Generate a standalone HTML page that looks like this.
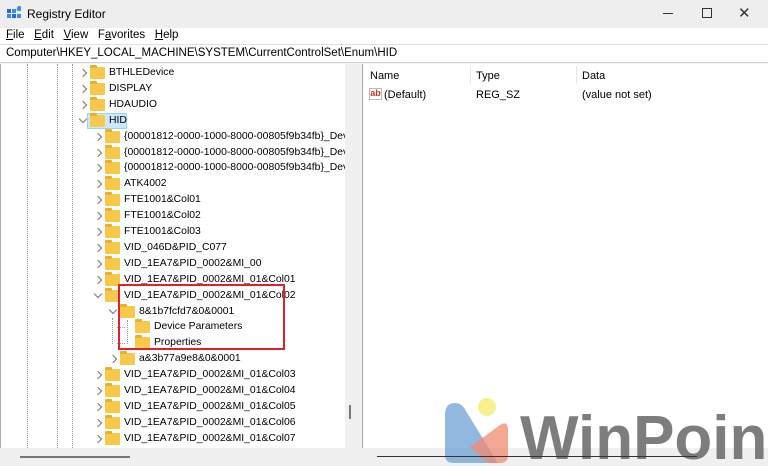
<!DOCTYPE html><html><head><style>
*{margin:0;padding:0;box-sizing:border-box}
body{width:768px;height:466px;overflow:hidden;background:#f3f3f3;font-family:"Liberation Sans",sans-serif;font-size:11px;color:#000;position:relative}
.a{position:absolute}
.row{position:absolute;height:16px;line-height:16px;white-space:nowrap;font-size:10.4px}
.f{position:absolute;width:15px;height:12px;top:2px;background:#f8c84a;border-radius:1px}
.f:before{content:"";position:absolute;left:0;top:-2px;width:7px;height:3px;background:#e8b030;border-radius:1px 1px 0 0}
.ch{position:absolute;top:4px;width:6px;height:6px;border-right:1px solid #777;border-bottom:1px solid #777;transform:rotate(-45deg)}
.cd{transform:rotate(45deg);top:2px}
.dl{position:absolute;border-left:1px dotted #999}
</style></head><body>
<div class="a" style="left:0;top:0;width:768px;height:28px;background:#eeeeee"></div>
<svg class="a" style="left:7px;top:6px" width="14" height="14"><rect x="0" y="3" width="4" height="4" fill="#1e6fd0"/><rect x="5" y="3" width="4" height="4" fill="#3b8de8"/><rect x="0" y="8" width="4" height="4" fill="#3b8de8"/><rect x="5" y="8" width="4" height="4" fill="#1e6fd0"/><rect x="10" y="8" width="4" height="4" fill="#3b8de8"/><rect x="10" y="0" width="4" height="5" fill="#3b8de8" transform="rotate(15 12 3)"/></svg>
<div class="a" style="left:27px;top:7px;font-size:12px">Registry Editor</div>
<div class="a" style="left:663px;top:13px;width:10px;height:1px;background:#333"></div>
<div class="a" style="left:702px;top:8px;width:10px;height:10px;border:1px solid #333"></div>
<div class="a" style="left:738px;top:4px;font-size:15px;color:#333">✕</div>
<div class="a" style="left:0;top:28px;width:768px;height:16px;background:#fff"></div>
<div class="a" style="left:6px;top:29px;font-size:11.5px"><u>F</u>ile&nbsp;&nbsp;&nbsp;<u>E</u>dit&nbsp;&nbsp;&nbsp;<u>V</u>iew&nbsp;&nbsp;&nbsp;F<u>a</u>vorites&nbsp;&nbsp;&nbsp;<u>H</u>elp</div>
<div class="a" style="left:0;top:44px;width:768px;height:19px;background:#fff;border-top:1px solid #e0e0e0;border-bottom:1px solid #d0d0d0"></div>
<div class="a" style="left:6px;top:47px;font-size:11.5px">Computer\HKEY_LOCAL_MACHINE\SYSTEM\CurrentControlSet\Enum\HID</div>
<div class="a" style="left:0;top:64px;width:345px;height:402px;background:#fff"></div>
<div class="a" style="left:0;top:64px;width:1px;height:402px;background:#aaa"></div>
<div class="a" style="left:345px;top:64px;width:17px;height:402px;background:#f0f0f0"></div>
<div class="a" style="left:349px;top:405px;width:2px;height:14px;background:#777"></div>
<div class="a" style="left:0;top:448px;width:345px;height:18px;background:#f0f0f0"></div>
<div class="a" style="left:20px;top:456px;width:110px;height:2px;background:#777"></div>
<div class="a" style="left:0;top:64px;width:345px;height:384px;overflow:hidden">
<div class="dl" style="left:27px;top:0;height:384px"></div>
<div class="dl" style="left:57px;top:0;height:384px"></div>
<div class="dl" style="left:72px;top:0;height:384px"></div>
<div class="dl" style="left:112px;top:254px;height:26px"></div>
<div class="dl" style="left:127px;top:256px;height:24px"></div>
<div id="tree" class="a" style="left:0;top:-64px;width:345px;height:466px"></div>
</div>
<div class="a" style="left:362px;top:64px;width:406px;height:402px;background:#fff;border-left:1px solid #aaa"></div>
<div class="a" style="left:370px;top:70px">Name</div>
<div class="a" style="left:476px;top:70px">Type</div>
<div class="a" style="left:582px;top:70px">Data</div>
<div class="a" style="left:470px;top:66px;width:1px;height:18px;background:#e5e5e5"></div>
<div class="a" style="left:576px;top:66px;width:1px;height:18px;background:#e5e5e5"></div>
<div class="a" style="left:369px;top:88px;width:13px;height:12px;border:1px solid #bbb;color:#d03020;font-size:9px;font-weight:bold;line-height:9px;text-align:center">ab</div>
<div class="a" style="left:384px;top:89px">(Default)</div>
<div class="a" style="left:476px;top:89px">REG_SZ</div>
<div class="a" style="left:582px;top:89px">(value not set)</div>
<div class="a" style="left:362px;top:448px;width:406px;height:18px;background:#f0f0f0"></div>
<svg class="a" style="left:440px;top:395px" width="328" height="71">
<circle cx="47" cy="12" r="9" fill="#f2ee7a" opacity=".85"/>
<path d="M5 20 Q5 8 15 8 Q22 8 26 16 L58 68 L14 68 Q5 68 5 60Z" fill="#6fa0d6" opacity=".75"/>
<path d="M30 52 L60 30 Q68 25 68 35 L68 60 Q68 68 60 68 L48 68Z" fill="#f28a72" opacity=".75"/>
<text x="80" y="64" font-family="Liberation Sans" font-weight="bold" font-size="62" fill="#707070" opacity=".9">WinPoin</text>
</svg>
<div class="a" style="left:377px;top:456px;width:320px;height:1px;background:#333"></div>
<div class="a" style="left:118px;top:284px;width:167px;height:66px;border:2px solid #e0202c"></div>
<script>
const rows=[
[0,'BTHLEDevice','c'],[0,'DISPLAY','c'],[0,'HDAUDIO','c'],[0,'HID','d',1],
[1,'{00001812-0000-1000-8000-00805f9b34fb}_Dev_','c'],[1,'{00001812-0000-1000-8000-00805f9b34fb}_Dev_','c'],[1,'{00001812-0000-1000-8000-00805f9b34fb}_Dev_','c'],
[1,'ATK4002','c'],[1,'FTE1001&Col01','c'],[1,'FTE1001&Col02','c'],[1,'FTE1001&Col03','c'],[1,'VID_046D&PID_C077','c'],[1,'VID_1EA7&PID_0002&MI_00','c'],[1,'VID_1EA7&PID_0002&MI_01&Col01','c'],[1,'VID_1EA7&PID_0002&MI_01&Col02','d'],
[2,'8&1b7fcfd7&0&0001','d'],[3,'Device Parameters',''],[3,'Properties',''],[2,'a&3b77a9e8&0&0001','c'],
[1,'VID_1EA7&PID_0002&MI_01&Col03','c'],[1,'VID_1EA7&PID_0002&MI_01&Col04','c'],[1,'VID_1EA7&PID_0002&MI_01&Col05','c'],[1,'VID_1EA7&PID_0002&MI_01&Col06','c'],[1,'VID_1EA7&PID_0002&MI_01&Col07','c']];
let h='';rows.forEach((r,i)=>{const y=65+i*15.9;const x=80+r[0]*15;
if(r[2])h+=`<div class="ch ${r[2]=='d'?'cd':''}" style="left:${x}px;top:${y+(r[2]=='d'?3:5)}px"></div>`;
else h+=`<div class="dl" style="left:${x-8}px;top:${y+8}px;width:8px;height:0;border-left:0;border-top:1px dotted #999"></div>`;
if(r[3])h+=`<div class="a" style="left:${x+7}px;top:${y}px;width:40px;height:16px;background:#cce8ff;border:1px solid #99d1ff"></div>`;
h+=`<div class="row" style="left:${x+10}px;top:${y}px;width:16px"><div class="f"></div></div><div class="row" style="left:${x+29}px;top:${y}px">${r[1].replace(/&/g,'&amp;')}</div>`;});
document.getElementById('tree').innerHTML=h;
</script>
</body></html>
